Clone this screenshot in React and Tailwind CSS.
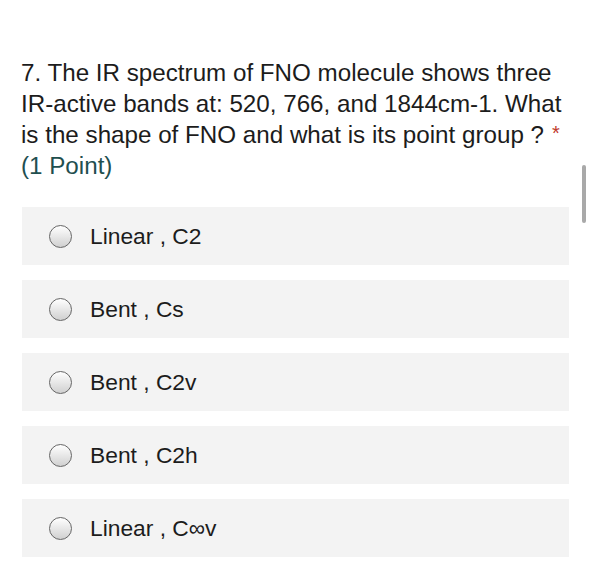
import React from 'react';

const options = ['Linear , C2', 'Bent , Cs', 'Bent , C2v', 'Bent , C2h', 'Linear , C∞v'];

const Radio = () => (
  <span className="block w-[23px] h-[23px] rounded-full border border-[#666666] bg-gradient-to-b from-[#ffffff] to-[#d0d0d0] shrink-0" />
);

const App = () => {
  return (
    <div className="relative w-[591px] h-[570px] bg-white overflow-hidden font-['Liberation_Sans',Arial,sans-serif] text-[#1c1c1c]">
      <div className="pt-[57px] pl-[21px] pr-[20px]">
        <p className="text-[24.2px] leading-[31px]">
          7. The IR spectrum of FNO molecule shows three IR-active bands at: 520, 766, and 1844cm-1. What is the shape of FNO and what is its point group ?
          <span className="inline-block ml-[8px] text-[#c0392b] text-[20px] leading-none align-top mt-[4px]">*</span>
          <br />
          <span className="text-[#1f4f4f]">(1 Point)</span>
        </p>
      </div>

      <div className="mt-[26px] px-[22px] flex flex-col gap-[15px]">
        {options.map((opt) => (
          <div key={opt} className="h-[58px] bg-[#f3f3f3] flex items-center pl-[27px] gap-[18px]">
            <Radio />
            <span className="text-[22.8px] leading-none">{opt}</span>
          </div>
        ))}
      </div>

      <div className="absolute left-[582px] top-[165px] w-[4px] h-[58px] rounded-full bg-[#a9a9a9]" />
    </div>
  );
};

export default App;
